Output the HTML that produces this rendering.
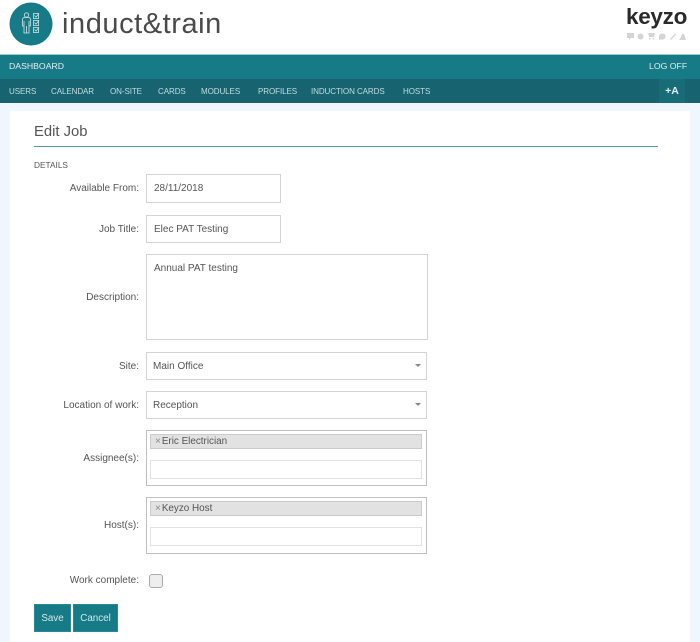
<!DOCTYPE html>
<html>
<head>
<meta charset="utf-8">
<style>
html,body{margin:0;padding:0;background:#eff6fd;}
body{width:700px;height:642px;position:relative;overflow:hidden;font-family:"Liberation Sans",sans-serif;color:#555;filter:blur(.3px);}
.a{position:absolute;white-space:nowrap;}
.lbl{position:absolute;right:561px;font-size:10px;line-height:14px;color:#555;white-space:nowrap;}
.box{position:absolute;box-sizing:border-box;background:#fff;border:1px solid #d4d4d4;font-size:10px;color:#555;}
.nav{position:absolute;top:86px;font-size:8.05px;line-height:12px;color:#c0dce0;white-space:nowrap;letter-spacing:-.1px;}
.tag{position:absolute;left:3px;right:4px;top:3px;height:15px;box-sizing:border-box;background:#e2e2e2;border:1px solid #cbcbcb;font-size:9.9px;line-height:13px;color:#555;padding-left:4px;}
.tag i{font-style:normal;color:#888;font-size:10px;margin-right:1px;}
.inp{position:absolute;left:3px;right:4px;top:29px;height:19px;box-sizing:border-box;background:#fff;border:1px solid #e2e2e2;}
.arrow{position:absolute;right:5px;top:11px;width:0;height:0;border-left:3px solid transparent;border-right:3px solid transparent;border-top:3px solid #888;}
.btn{position:absolute;top:604px;height:28px;box-sizing:border-box;background:#177a87;border:1px solid #2a8794;color:#d5e8eb;font-size:9.8px;line-height:27px;text-align:center;}
</style>
</head>
<body>
<div class="a" style="left:0;top:0;width:700px;height:54px;background:#fff;"></div>
<svg class="a" style="left:9px;top:2px;" width="44" height="44" viewBox="0 0 44 44">
<circle cx="22" cy="22" r="21.5" fill="#177a87"/>
<g fill="none" stroke="#cfe4e7" stroke-width=".8">
<circle cx="17.5" cy="13" r="2.2"/>
<path d="M13.5 24v-6q0-2.5 2-2.5h4q2 0 2 2.5v6h-1.5v7h-5v-7zM15 19v5M20 19v5M17.5 24v7"/>
<rect x="24.5" y="11.5" width="5" height="5"/><path d="M25.5 13.5l1.5 1.5 3-3.500"/>
<rect x="24.500" y="18.500" width="5" height="5"/><path d="M25.500 20.500l1.500 1.500 3-3.500"/>
<rect x="24.500" y="25.500" width="5" height="5"/><path d="M25.500 27.500l1.500 1.500 3-3.500"/>
</g>
</svg>
<div class="a" style="left:62px;top:6px;font-size:29px;line-height:36px;color:#4a4a4a;letter-spacing:.56px;">induct&amp;train</div>
<div class="a" style="left:626px;top:4px;font-size:22.500px;line-height:26px;font-weight:bold;color:#2a2a2a;letter-spacing:-.3px;">keyzo</div>
<svg class="a" style="left:626px;top:32px;" width="62" height="9" viewBox="0 0 62 9" fill="#d4d4d4">
<path d="M1 1h7v5H5L3 8V6H1z"/><circle cx="14.500" cy="4.500" r="3"/><path d="M22 1h7l-1 4h-5zM23 6h1.500v1.500H23zM26.500 6H28v1.500h-1.500z"/><path d="M33 4.500a3.300 3 0 1 1 2 2.800L33 8z"/><path d="M44 7l5-5.500 1 1-5 5.500z"/><path d="M53 8l2-3 1-3h2l1 3 1 3z"/>
</svg>

<div class="a" style="left:0;top:54px;width:700px;height:25px;background:#177a87;border-top:1px solid #9ccbd1;box-sizing:border-box;"></div>
<div class="a" style="left:0;top:79px;width:700px;height:24px;background:#176470;"></div>
<div class="a" style="left:9px;top:60px;font-size:8.700px;line-height:12px;color:#e3eff1;">DASHBOARD</div>
<div class="a" style="left:649px;top:60px;font-size:8.700px;line-height:12px;color:#e3eff1;">LOG OFF</div>
<div class="nav" style="left:9px;">USERS</div>
<div class="nav" style="left:51px;">CALENDAR</div>
<div class="nav" style="left:110px;">ON-SITE</div>
<div class="nav" style="left:158px;">CARDS</div>
<div class="nav" style="left:201px;">MODULES</div>
<div class="nav" style="left:258px;">PROFILES</div>
<div class="nav" style="left:311px;">INDUCTION CARDS</div>
<div class="nav" style="left:403px;">HOSTS</div>
<div class="a" style="left:659px;top:79px;width:26px;height:24px;background:#176c78;color:#e3eff1;font-size:10.500px;font-weight:bold;line-height:24px;text-align:center;">+A</div>

<div class="a" style="left:10px;top:111px;width:680px;height:531px;background:#fff;"></div>
<div class="a" style="left:34px;top:122px;font-size:14.800px;line-height:20px;color:#555;">Edit Job</div>
<div class="a" style="left:34px;top:146px;width:624px;height:1px;background:#4d9ea8;"></div>
<div class="a" style="left:34px;top:159px;font-size:8.300px;line-height:12px;color:#555;">DETAILS</div>

<div class="lbl" style="top:182px;">Available From:</div>
<div class="box" style="left:146px;top:174px;width:135px;height:29px;padding-left:7px;line-height:28px;">28/11/2018</div>
<div class="lbl" style="top:223px;">Job Title:</div>
<div class="box" style="left:146px;top:215px;width:135px;height:28px;padding-left:7px;line-height:27px;">Elec PAT Testing</div>
<div class="lbl" style="top:291px;">Description:</div>
<div class="box" style="left:146px;top:254px;width:282px;height:86px;padding:7px 7px;line-height:14px;">Annual PAT testing</div>
<div class="lbl" style="top:360px;">Site:</div>
<div class="box" style="left:146px;top:352px;width:281px;height:28px;padding-left:6px;line-height:27px;">Main Office<span class="arrow"></span></div>
<div class="lbl" style="top:399px;">Location of work:</div>
<div class="box" style="left:146px;top:391px;width:281px;height:28px;padding-left:6px;line-height:27px;">Reception<span class="arrow"></span></div>
<div class="lbl" style="top:452px;">Assignee(s):</div>
<div class="box" style="left:146px;top:430px;width:281px;height:56px;border-color:#c0c0c0;"><div class="tag"><i>×</i>Eric Electrician</div><div class="inp"></div></div>
<div class="lbl" style="top:519px;">Host(s):</div>
<div class="box" style="left:146px;top:497px;width:281px;height:57px;border-color:#c0c0c0;"><div class="tag"><i>×</i>Keyzo Host</div><div class="inp"></div></div>
<div class="lbl" style="top:574px;">Work complete:</div>
<div class="a" style="left:149px;top:574px;width:14px;height:14px;box-sizing:border-box;background:#eee;border:1px solid #aaa;border-radius:3px;"></div>
<div class="btn" style="left:34px;width:37px;">Save</div>
<div class="btn" style="left:73px;width:45px;">Cancel</div>
</body>
</html>
